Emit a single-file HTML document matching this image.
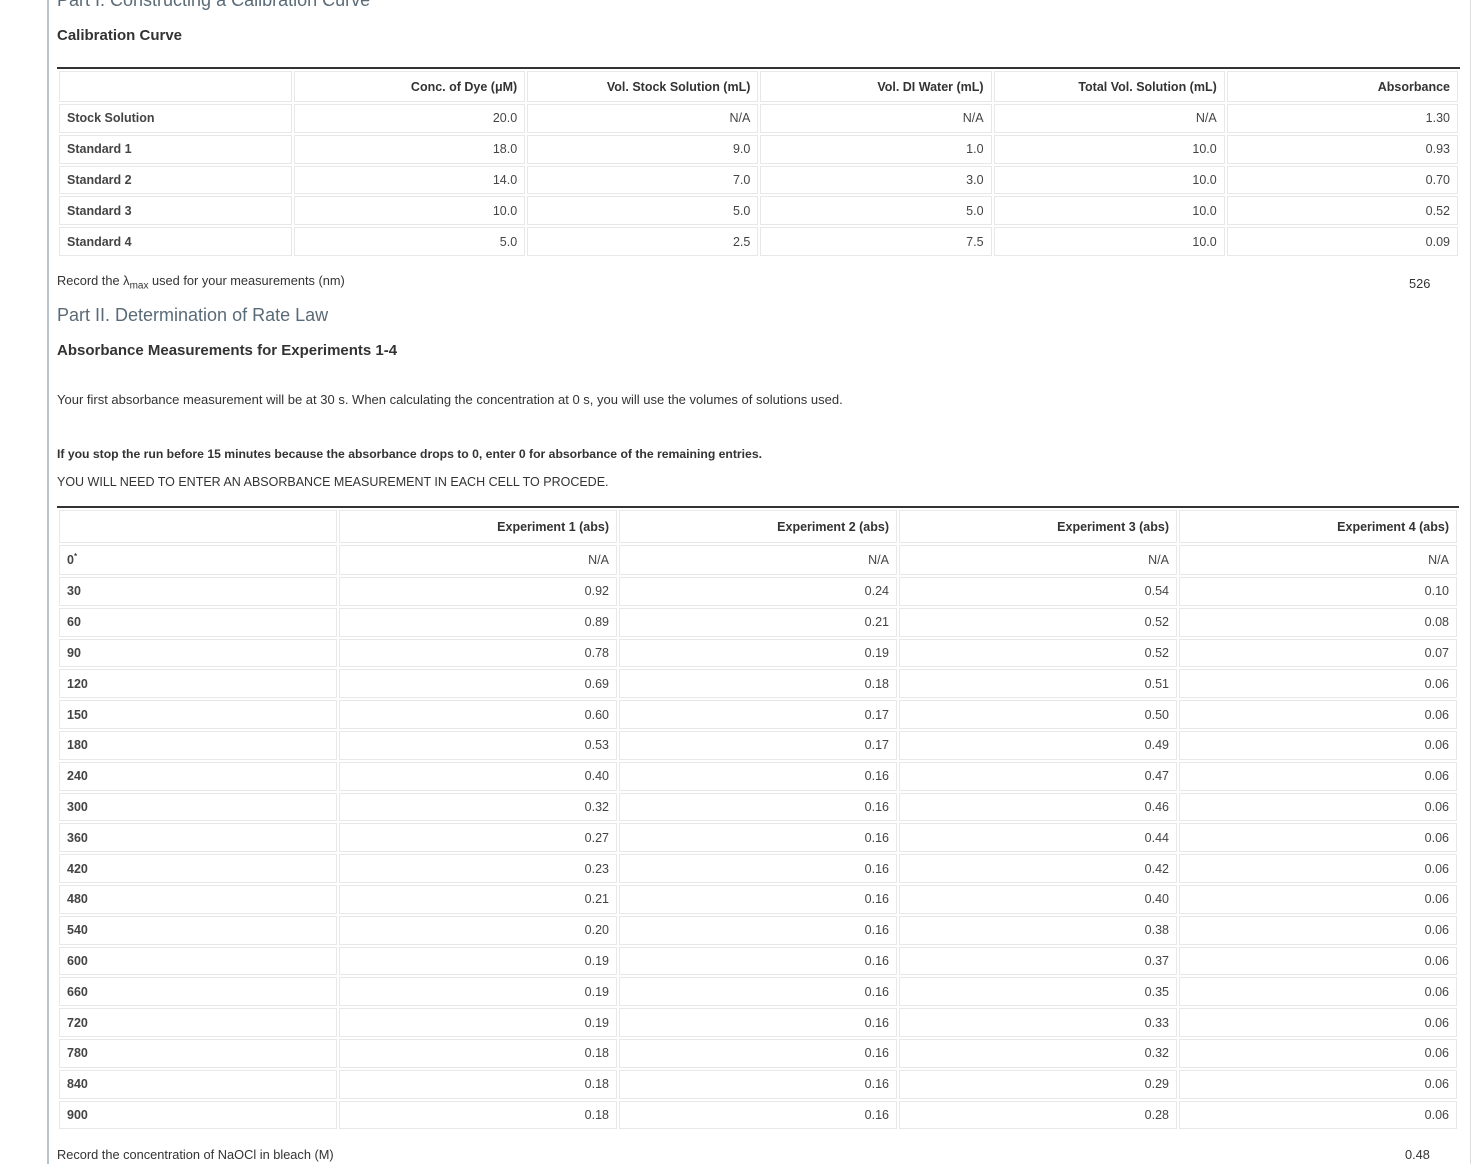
<!DOCTYPE html>
<html><head><meta charset="utf-8"><style>
body{margin:0;background:#fff;font-family:"Liberation Sans",sans-serif;color:#333;font-size:12.8px;width:1475px;height:1164px;overflow:hidden;position:relative}
.vl{position:absolute;left:47px;top:0;width:2px;height:1164px;background:#b8c4cc}
.rl{position:absolute;left:1470px;top:0;width:1px;height:1164px;background:#ddd}
.abs{position:absolute;white-space:nowrap}
h2{position:absolute;left:57px;margin:0;font-weight:normal;font-size:18px;color:#5a6b78}
h3{position:absolute;left:57px;margin:0;font-size:15px;font-weight:bold;color:#333}
table{position:absolute;left:57px;border-top:2px solid #333;border-collapse:separate;border-spacing:2px;table-layout:fixed}
td,th{border:1px solid #e8e8e8;padding:0 7px;text-align:right;font-size:12.5px;box-sizing:border-box}
th{font-weight:bold;color:#333}
td:first-child{text-align:left;font-weight:bold}
td{color:#444}
</style></head><body>
<div class="vl"></div><div class="rl"></div>
<h2 style="top:-10px">Part I. Constructing a Calibration Curve</h2>
<h3 style="top:27px">Calibration Curve</h3>
<table style="top:67px;width:1403px">
<colgroup><col style="width:233px"><col><col><col><col><col></colgroup>
<tr style="height:31px"><th></th><th>Conc. of Dye (μM)</th><th>Vol. Stock Solution (mL)</th><th>Vol. DI Water (mL)</th><th>Total Vol. Solution (mL)</th><th>Absorbance</th></tr>
<tr style="height:28.8px"><td>Stock Solution</td><td>20.0</td><td>N/A</td><td>N/A</td><td>N/A</td><td>1.30</td></tr>
<tr style="height:28.8px"><td>Standard 1</td><td>18.0</td><td>9.0</td><td>1.0</td><td>10.0</td><td>0.93</td></tr>
<tr style="height:28.8px"><td>Standard 2</td><td>14.0</td><td>7.0</td><td>3.0</td><td>10.0</td><td>0.70</td></tr>
<tr style="height:28.8px"><td>Standard 3</td><td>10.0</td><td>5.0</td><td>5.0</td><td>10.0</td><td>0.52</td></tr>
<tr style="height:28.8px"><td>Standard 4</td><td>5.0</td><td>2.5</td><td>7.5</td><td>10.0</td><td>0.09</td></tr>
</table>
<div class="abs" style="left:57px;top:273px">Record the λ<sub style="font-size:10px">max</sub> used for your measurements (nm)</div>
<div class="abs" style="left:1409px;top:276px">526</div>
<h2 style="top:305px">Part II. Determination of Rate Law</h2>
<h3 style="top:342px">Absorbance Measurements for Experiments 1-4</h3>
<div class="abs" style="left:57px;top:392px;font-size:13px">Your first absorbance measurement will be at 30 s. When calculating the concentration at 0 s, you will use the volumes of solutions used.</div>
<div class="abs" style="left:57px;top:447px;font-weight:bold;font-size:12.2px">If you stop the run before 15 minutes because the absorbance drops to 0, enter 0 for absorbance of the remaining entries.</div>
<div class="abs" style="left:57px;top:475px;font-size:12.5px">YOU WILL NEED TO ENTER AN ABSORBANCE MEASUREMENT IN EACH CELL TO PROCEDE.</div>
<table style="top:506px;width:1402px">
<tr style="height:33px"><th></th><th>Experiment 1 (abs)</th><th>Experiment 2 (abs)</th><th>Experiment 3 (abs)</th><th>Experiment 4 (abs)</th></tr>
<tr style="height:30px"><td>0<sup style="font-size:8px">*</sup></td><td>N/A</td><td>N/A</td><td>N/A</td><td>N/A</td></tr>
<tr style="height:28.8px"><td>30</td><td>0.92</td><td>0.24</td><td>0.54</td><td>0.10</td></tr>
<tr style="height:28.8px"><td>60</td><td>0.89</td><td>0.21</td><td>0.52</td><td>0.08</td></tr>
<tr style="height:28.8px"><td>90</td><td>0.78</td><td>0.19</td><td>0.52</td><td>0.07</td></tr>
<tr style="height:28.8px"><td>120</td><td>0.69</td><td>0.18</td><td>0.51</td><td>0.06</td></tr>
<tr style="height:28.8px"><td>150</td><td>0.60</td><td>0.17</td><td>0.50</td><td>0.06</td></tr>
<tr style="height:28.8px"><td>180</td><td>0.53</td><td>0.17</td><td>0.49</td><td>0.06</td></tr>
<tr style="height:28.8px"><td>240</td><td>0.40</td><td>0.16</td><td>0.47</td><td>0.06</td></tr>
<tr style="height:28.8px"><td>300</td><td>0.32</td><td>0.16</td><td>0.46</td><td>0.06</td></tr>
<tr style="height:28.8px"><td>360</td><td>0.27</td><td>0.16</td><td>0.44</td><td>0.06</td></tr>
<tr style="height:28.8px"><td>420</td><td>0.23</td><td>0.16</td><td>0.42</td><td>0.06</td></tr>
<tr style="height:28.8px"><td>480</td><td>0.21</td><td>0.16</td><td>0.40</td><td>0.06</td></tr>
<tr style="height:28.8px"><td>540</td><td>0.20</td><td>0.16</td><td>0.38</td><td>0.06</td></tr>
<tr style="height:28.8px"><td>600</td><td>0.19</td><td>0.16</td><td>0.37</td><td>0.06</td></tr>
<tr style="height:28.8px"><td>660</td><td>0.19</td><td>0.16</td><td>0.35</td><td>0.06</td></tr>
<tr style="height:28.8px"><td>720</td><td>0.19</td><td>0.16</td><td>0.33</td><td>0.06</td></tr>
<tr style="height:28.8px"><td>780</td><td>0.18</td><td>0.16</td><td>0.32</td><td>0.06</td></tr>
<tr style="height:28.8px"><td>840</td><td>0.18</td><td>0.16</td><td>0.29</td><td>0.06</td></tr>
<tr style="height:28.8px"><td>900</td><td>0.18</td><td>0.16</td><td>0.28</td><td>0.06</td></tr>
</table>
<div class="abs" style="left:57px;top:1147px">Record the concentration of NaOCl in bleach (M)</div>
<div class="abs" style="left:1405px;top:1147px">0.48</div>
</body></html>
